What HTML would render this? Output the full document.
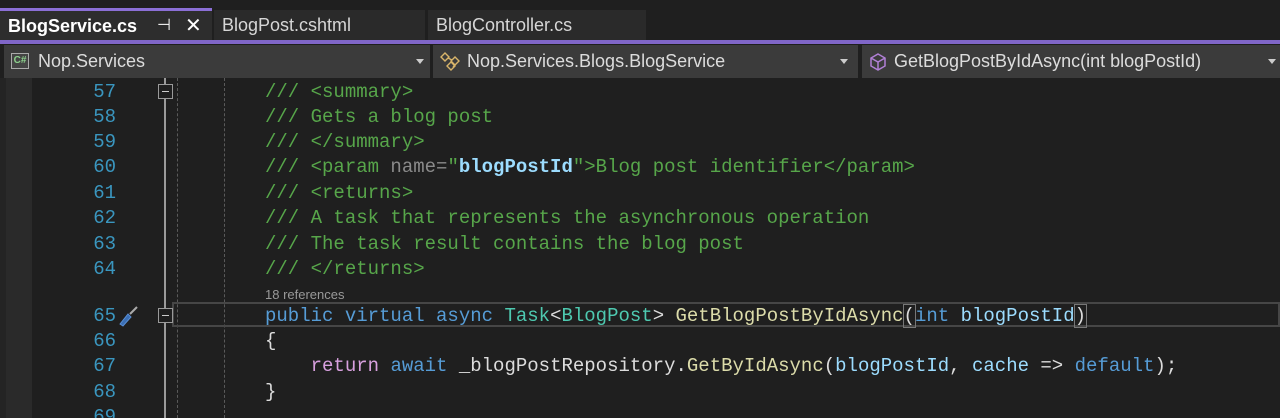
<!DOCTYPE html>
<html><head><style>
*{margin:0;padding:0;box-sizing:border-box}
html,body{width:1280px;height:418px;overflow:hidden}
body{background:#1f1f1f;font-family:"Liberation Sans",sans-serif;position:relative}
.abs{position:absolute}
.tab{position:absolute;top:10px;height:30px;color:#d6d6d6;font-size:18px;line-height:30px;padding-left:8px;background:#2a2a2a}
.dd{position:absolute;top:45px;height:33px;background:#3b3b3b;color:#dcdcdc;font-size:18px;line-height:33px}
.arr{position:absolute;top:14px;width:0;height:0;border-left:4px solid transparent;border-right:4px solid transparent;border-top:5px solid #ccc}
.ln{position:absolute;left:60px;width:56px;text-align:right;color:#3a96bf;font-family:"Liberation Mono",monospace;font-size:19px}
.code{position:absolute;left:265px;font-family:"Liberation Mono",monospace;font-size:19px;white-space:pre;color:#dcdcdc}
.c{color:#57a64a}.g{color:#8a8a8a}.k{color:#569cd6}.t{color:#4ec9b0}.m{color:#dcdcaa}.p{color:#9cdcfe}.r{color:#d8a0df}
.dot{position:absolute;top:78px;bottom:0;border-left:1px dashed #5a5a5a}
</style></head><body>
<div class="abs" style="left:0;top:8px;width:212px;height:3px;background:#8b6fd6"></div>
<div class="tab" style="left:0;width:212px;background:#2d2d2d;color:#fff;font-weight:bold;top:11px;height:29px">BlogService.cs<span style="position:absolute;left:157px;font-weight:normal;font-size:16px">⊣</span><span style="position:absolute;left:185px;font-weight:normal;font-size:20px">✕</span></div>
<div class="tab" style="left:214px;width:211px">BlogPost.cshtml</div>
<div class="tab" style="left:428px;width:218px">BlogController.cs</div>
<div class="abs" style="left:0;top:40px;width:1280px;height:4px;background:#8066c8"></div>
<div class="dd" style="left:4px;width:426px"><span class="abs" style="left:7px;top:8px;width:18px;height:16px;border:1px solid #aaa;background:#444;font-size:10px;line-height:14px;text-align:center;color:#8dd18d;font-weight:bold">C#</span><span class="abs" style="left:34px">Nop.Services</span><span class="arr" style="left:412px"></span></div>
<div class="dd" style="left:433px;width:425px"><svg class="abs" style="left:6px;top:6px" width="26" height="22" viewBox="0 0 26 22"><path d="M2 6 L6 2 L10 6 L6 10 Z M12 10 L16 6 L20 10 L16 14 Z M8 15 L12 11 L16 15 L12 19 Z M9 7 L13 9 M16 14 L14 16" fill="none" stroke="#d9b56a" stroke-width="1.4"/></svg><span class="abs" style="left:34px">Nop.Services.Blogs.BlogService</span><span class="arr" style="left:407px"></span></div>
<div class="dd" style="left:862px;width:418px"><svg class="abs" style="left:6px;top:7px" width="20" height="20" viewBox="0 0 20 20"><path d="M10 2 L17 6 L17 14 L10 18 L3 14 L3 6 Z M3 6 L10 10 L17 6 M10 10 L10 18" fill="none" stroke="#b180d7" stroke-width="1.5"/></svg><span class="abs" style="left:32px">GetBlogPostByIdAsync(int blogPostId)</span><span class="arr" style="left:406px"></span></div>
<div class="abs" style="left:0;top:78px;width:32px;height:340px;background:#2a2a2a"></div>
<div class="abs" style="left:0;top:78px;width:6px;height:340px;background:#242424"></div>
<div class="abs" style="left:164px;top:78px;width:2px;height:340px;background:#9a9a9a"></div>
<div class="dot" style="left:177px"></div>
<div class="dot" style="left:224px"></div>
<div class="abs" style="left:158px;top:84px;width:15px;height:15px;border:1px solid #9a9a9a;background:#1f1f1f"><div style="margin:6px 3px 0;height:1px;background:#ccc"></div></div>
<div class="abs" style="left:172px;top:302px;width:1108px;height:25px;border:2px solid #464646"></div>
<div class="abs" style="left:158px;top:308px;width:15px;height:15px;border:1px solid #9a9a9a;background:#1f1f1f"><div style="margin:6px 3px 0;height:1px;background:#ccc"></div></div>
<div class="ln" style="top:81px">57</div><div class="code" style="top:81px"><span class="c">/// &lt;summary&gt;</span></div>
<div class="ln" style="top:106px">58</div><div class="code" style="top:106px"><span class="c">/// Gets a blog post</span></div>
<div class="ln" style="top:131px">59</div><div class="code" style="top:131px"><span class="c">/// &lt;/summary&gt;</span></div>
<div class="ln" style="top:156px">60</div><div class="code" style="top:156px"><span class="c">/// &lt;param </span><span class="g">name=</span><span class="c">"</span><span class="p" style="font-weight:bold">blogPostId</span><span class="c">"&gt;Blog post identifier&lt;/param&gt;</span></div>
<div class="ln" style="top:182px">61</div><div class="code" style="top:182px"><span class="c">/// &lt;returns&gt;</span></div>
<div class="ln" style="top:207px">62</div><div class="code" style="top:207px"><span class="c">/// A task that represents the asynchronous operation</span></div>
<div class="ln" style="top:233px">63</div><div class="code" style="top:233px"><span class="c">/// The task result contains the blog post</span></div>
<div class="ln" style="top:258px">64</div><div class="code" style="top:258px"><span class="c">/// &lt;/returns&gt;</span></div>
<div class="abs" style="left:265px;top:287px;font-size:13px;color:#999">18 references</div>
<div class="ln" style="top:305px">65</div>
<svg class="abs" style="left:116px;top:304px" width="24" height="24" viewBox="0 0 24 24"><path d="M14 10 L21 3" stroke="#aaa" stroke-width="2"/><path d="M4 20 L12 10 L15 13 L7 22 Z" fill="#3b6fb5" stroke="#5a8fd6"/></svg>
<div class="code" style="top:305px"><span class="k">public virtual async </span><span class="t">Task</span>&lt;<span class="t">BlogPost</span>&gt; <span class="m">GetBlogPostByIdAsync</span><span style="outline:1px solid #777">(</span><span class="k">int</span> <span class="p">blogPostId</span><span style="outline:1px solid #777">)</span></div>
<div class="ln" style="top:330px">66</div><div class="code" style="top:330px">{</div>
<div class="ln" style="top:355px">67</div><div class="code" style="top:355px">    <span class="r">return</span> <span class="k">await</span> _blogPostRepository.<span class="m">GetByIdAsync</span>(<span class="p">blogPostId</span>, <span class="p">cache</span> =&gt; <span class="k">default</span>);</div>
<div class="ln" style="top:381px">68</div><div class="code" style="top:381px">}</div>
<div class="ln" style="top:406px">69</div>
</body></html>
